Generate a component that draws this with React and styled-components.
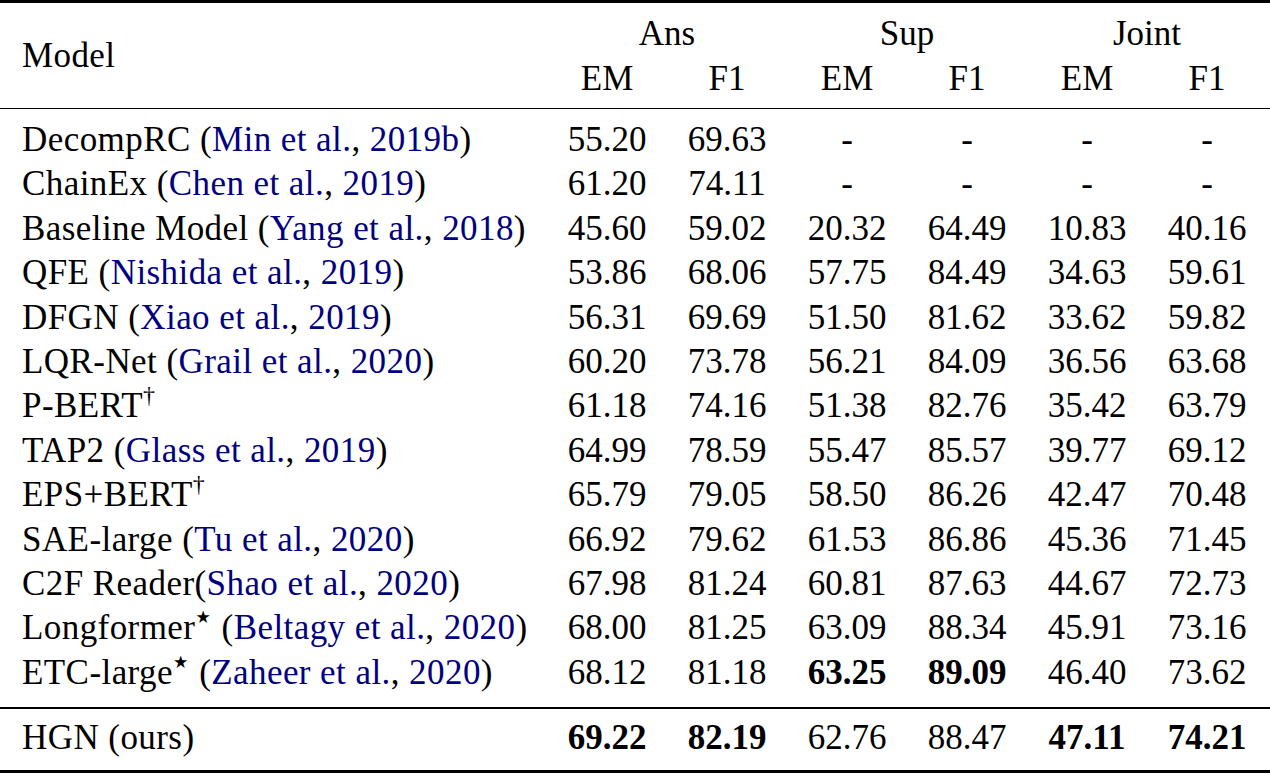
import styled, { createGlobalStyle } from "styled-components";

const GlobalStyle = createGlobalStyle`
  body {
    margin: 0;
    background: #fff;
    color: #000;
    font-family: "Liberation Serif", "Times New Roman", serif;
  }
`;

const rows = [
  { name: "DecompRC", cite: "Min et al.", year: "2019b", vals: ["55.20", "69.63", "-", "-", "-", "-"] },
  { name: "ChainEx", cite: "Chen et al.", year: "2019", vals: ["61.20", "74.11", "-", "-", "-", "-"] },
  { name: "Baseline Model", cite: "Yang et al.", year: "2018", vals: ["45.60", "59.02", "20.32", "64.49", "10.83", "40.16"] },
  { name: "QFE", cite: "Nishida et al.", year: "2019", vals: ["53.86", "68.06", "57.75", "84.49", "34.63", "59.61"] },
  { name: "DFGN", cite: "Xiao et al.", year: "2019", vals: ["56.31", "69.69", "51.50", "81.62", "33.62", "59.82"] },
  { name: "LQR-Net", cite: "Grail et al.", year: "2020", vals: ["60.20", "73.78", "56.21", "84.09", "36.56", "63.68"] },
  { name: "P-BERT", mark: "dagger", vals: ["61.18", "74.16", "51.38", "82.76", "35.42", "63.79"] },
  { name: "TAP2", cite: "Glass et al.", year: "2019", vals: ["64.99", "78.59", "55.47", "85.57", "39.77", "69.12"] },
  { name: "EPS+BERT", mark: "dagger", vals: ["65.79", "79.05", "58.50", "86.26", "42.47", "70.48"] },
  { name: "SAE-large", cite: "Tu et al.", year: "2020", vals: ["66.92", "79.62", "61.53", "86.86", "45.36", "71.45"] },
  { name: "C2F Reader", cite: "Shao et al.", year: "2020", tight: true, vals: ["67.98", "81.24", "60.81", "87.63", "44.67", "72.73"] },
  { name: "Longformer", mark: "star", cite: "Beltagy et al.", year: "2020", vals: ["68.00", "81.25", "63.09", "88.34", "45.91", "73.16"] },
  { name: "ETC-large", mark: "star", cite: "Zaheer et al.", year: "2020", vals: ["68.12", "81.18", "63.25", "89.09", "46.40", "73.62"], bold: [2, 3] },
];

const ours = { name: "HGN (ours)", vals: ["69.22", "82.19", "62.76", "88.47", "47.11", "74.21"], bold: [0, 1, 4, 5] };

const Page = styled.div`
  width: 1270px;
  height: 776px;
  overflow: hidden;
  font-size: 35px;
`;

const Rule = styled.div`
  height: ${(p) => (p.$thick ? "3px" : "1.4px")};
  background: #000;
  margin-top: ${(p) => p.$top || 0}px;
  margin-bottom: ${(p) => p.$bottom || 0}px;
`;

const Grid = styled.div`
  display: grid;
  grid-template-columns: 525px repeat(6, 120px);
  padding-left: 22px;
  line-height: 44.4px;
  white-space: nowrap;
`;

const Head = styled(Grid)`
  padding-top: 8px;
  grid-template-rows: 45px 45px;
  line-height: 45px;
`;

const ModelHead = styled.div`
  grid-row: 1 / span 2;
  align-self: center;
  line-height: 44.4px;
  letter-spacing: 0.4px;
`;

const Group = styled.div`
  grid-column: span 2;
  text-align: center;
`;

const Cell = styled.div`
  text-align: center;
  font-weight: ${(p) => (p.$bold ? 700 : 400)};
`;

const Name = styled.div`
  text-align: left;
  letter-spacing: 0.43px;
`;

const Cite = styled.span`
  color: #000080;
`;

const Dagger = styled.span`
  font-size: 24px;
  line-height: 0;
  vertical-align: 14px;
  letter-spacing: 0;
`;

const Star = styled.span`
  display: inline-block;
  width: 20px;
  margin-left: -3px;
  text-align: center;
  font-family: "DejaVu Sans", sans-serif;
  font-size: 34px;
  line-height: 10px;
  vertical-align: 11px;
  letter-spacing: 0;
`;

const NameCell = ({ row }) => (
  <Name>
    {row.name}
    {row.mark === "dagger" && <Dagger>†</Dagger>}
    {row.mark === "star" && <Star>⋆</Star>}
    {row.cite && (
      <>
        {row.tight ? "(" : " ("}
        <Cite>{row.cite}</Cite>, <Cite>{row.year}</Cite>)
      </>
    )}
  </Name>
);

const DataRow = ({ row }) => (
  <>
    <NameCell row={row} />
    {row.vals.map((v, i) => (
      <Cell key={i} $bold={row.bold && row.bold.includes(i)}>
        {v}
      </Cell>
    ))}
  </>
);

export default function App() {
  return (
    <Page>
      <GlobalStyle />
      <Rule $thick />
      <Head>
        <ModelHead>Model</ModelHead>
        <Group>Ans</Group>
        <Group>Sup</Group>
        <Group>Joint</Group>
        {["EM", "F1", "EM", "F1", "EM", "F1"].map((h, i) => (
          <Cell key={i}>{h}</Cell>
        ))}
      </Head>
      <Rule $top={7} $bottom={8.5} />
      <Grid>
        {rows.map((r) => (
          <DataRow key={r.name} row={r} />
        ))}
      </Grid>
      <Rule $top={12.3} $bottom={7} />
      <Grid>
        <DataRow row={ours} />
      </Grid>
      <Rule $thick $top={9.6} />
    </Page>
  );
}
